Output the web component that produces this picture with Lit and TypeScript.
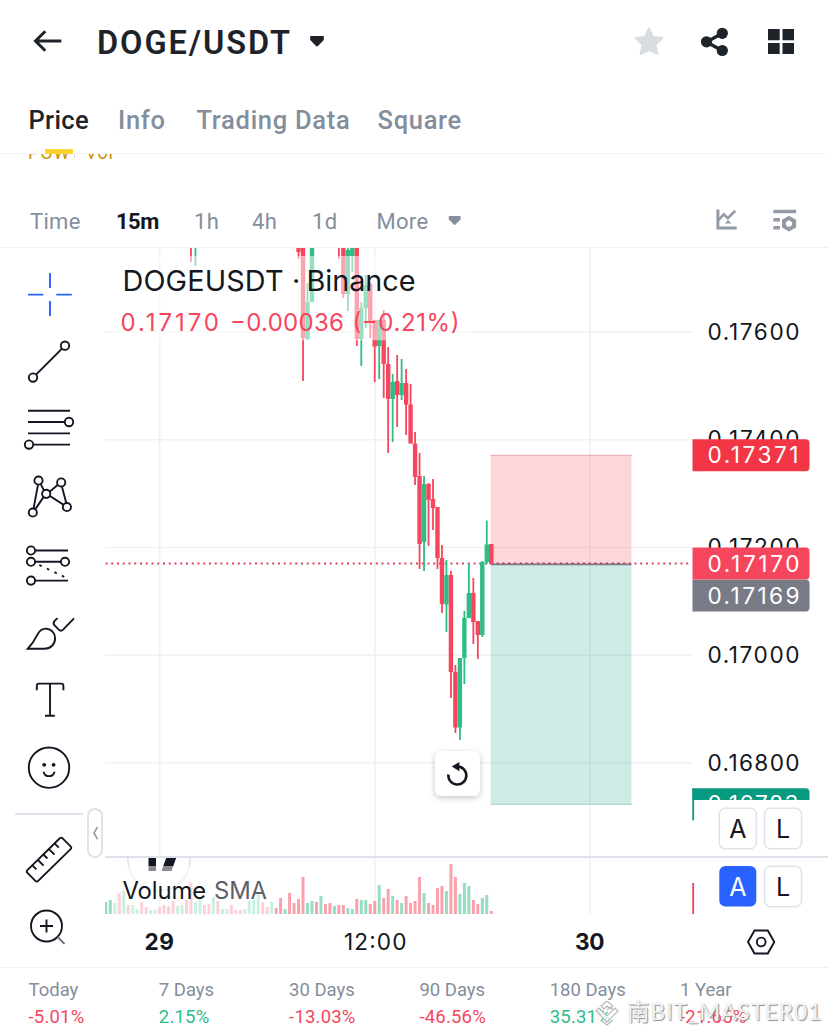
import { LitElement, html, svg, css } from "lit";
import { customElement } from "lit/decorators.js";

type Candle = [number, "r" | "g", number, number, number, number];

// index, direction, wick top, body top, body bottom, wick bottom
const CANDLES: Candle[] = [
  [7, "r", 240, 240, 240, 262], [8, "g", 240, 240, 240, 266],
  [31, "r", 240, 240, 252, 259], [32, "r", 240, 240, 338, 381],
  [33, "g", 283, 302, 339, 340], [34, "g", 240, 240, 302, 302],
  [40, "r", 240, 240, 240, 259], [41, "r", 240, 240, 294, 298],
  [42, "g", 240, 250, 294, 311], [43, "g", 240, 240, 256, 272],
  [44, "r", 240, 240, 339, 346], [45, "g", 302, 308, 339, 366],
  [46, "g", 275, 285, 308, 328], [47, "r", 282, 284, 322, 338],
  [48, "r", 320, 320, 346.5, 382], [49, "g", 320, 320, 346, 379],
  [50, "r", 310, 320, 364, 398], [51, "r", 347, 364, 399, 453],
  [52, "g", 374, 382, 399, 442], [53, "r", 355, 381, 395, 427],
  [54, "g", 359, 383, 395, 400], [55, "r", 369, 383, 404.5, 435],
  [56, "r", 384, 404.5, 443.5, 443.5], [57, "r", 432, 443.5, 477, 485],
  [58, "r", 453, 476, 544, 569], [59, "g", 476, 484, 542, 571],
  [60, "r", 483, 484, 500, 546], [61, "r", 479, 499, 508, 530],
  [62, "r", 507, 507, 558, 569], [63, "r", 545, 558, 604, 613],
  [64, "g", 560, 575, 604.5, 632], [65, "r", 571, 575, 672, 698],
  [66, "r", 665, 672, 727.5, 733], [67, "g", 658, 658, 727.5, 740],
  [68, "g", 611, 618, 658, 684], [69, "g", 564, 593, 618, 618],
  [70, "r", 578, 593, 622, 644], [71, "r", 621, 621, 635, 659],
  [72, "g", 561, 562, 635, 637], [73, "g", 520.5, 544.5, 562, 564],
  [74, "r", 544, 544, 564, 564],
];

const VOLUME =
  "g12 g14 g11 r21 g23 r9 g9 g5 r12 r7 g4 g4 r7 r9 r8 r13 g8 g9 r14 r31 g12 g15 r9 r10 g17 r13 g5 g5 r9 r4 r4 g5 g13 g14 g21 r12 r7 g12 r6 r16 g5 r21 r11 r15 " +
  "r37 g11 g13 r12 g18 r10 r11 g8 r9 r9 g6 g5 r15 g14 g14 r10 r13 g29 r16 r25 g18 r14 g11 r18 r11 r13 r37 g21 r11 r9 r26 r28 g23 r50 r37 g20 g31 g28 r14 r10 g16 g19 r3";

const xAt = (i: number) => 159.6 + 4.482 * i;

@customElement("price-chart")
export class PriceChart extends LitElement {
  static styles = css`
    :host { display: block; width: 723px; height: 719px; }
    svg { display: block; font-family: Inter, "Liberation Sans", sans-serif; }
    .grid { stroke: #f0f1f3; stroke-width: 1.6; }
    .divider { stroke: #dfe2ea; stroke-width: 2; }
    .r { fill: #f6465d; }
    .g { fill: #2ebd85; }
    .vr { fill: #f9a2ae; }
    .vg { fill: #96dec2; }
    .axis { font-size: 22.6px; fill: #131722; }
    .tag { font-size: 22.6px; fill: #fff; }
    .bold { font-weight: 700; }
    .title { font-size: 28.8px; fill: #131722; }
    .change { font-size: 24px; fill: #f6465d; }
    .study { font-size: 23.8px; fill: #131722; }
    .muted { fill: #5d606b; }
    .veil { fill: #fff; fill-opacity: 0.5; }
    .box { fill: #fff; stroke: #e0e3eb; stroke-width: 1.6; }
    .box-on { fill: #2962ff; }
    .letter { font-size: 25px; fill: #131722; text-anchor: middle; }
    .letter-on { fill: #fff; }
    .line { fill: none; stroke: #131722; stroke-width: 1.9; }
    .arc { stroke-width: 2.6; }
    .button { fill: #fff; filter: drop-shadow(0 2px 3px rgba(0, 0, 0, 0.22)); }
  `;

  private candle([i, d, wt, bt, bb, wb]: Candle) {
    const x = xAt(i);
    return svg`<g class=${d}><rect x=${x - 0.9} y=${wt} width="1.8" height=${wb - wt}></rect>
      <rect x=${x - 2.2} y=${bt} width="4.4" height=${bb - bt}></rect></g>`;
  }

  private box(x: number, y: number, letter: string, on = false) {
    return svg`<rect class=${on ? "box-on" : "box"} x=${x} y=${y} width="37" height="40.5" rx="6"></rect>
      <text class=${on ? "letter letter-on" : "letter"} x=${x + 18.5} y=${y + 29.5}>${letter}</text>`;
  }

  private tag(y: number, fill: string, label: string, width = 91) {
    return svg`<path d="M692.5 ${y}h113a4 4 0 0 1 4 4v24a4 4 0 0 1 -4 4h-113z" fill=${fill}></path>
      <text class="tag" x="707.5" y=${y + 24} textLength=${width}>${label}</text>`;
  }

  render() {
    return html`<svg width="723" height="719" viewBox="105 248 723 719">
      <defs>
        <clipPath id="pane"><rect x="105" y="248" width="587" height="609"></rect></clipPath>
        <clipPath id="lower"><rect x="105" y="858" width="723" height="56"></rect></clipPath>
        <clipPath id="target"><rect x="690" y="788" width="130" height="12"></rect></clipPath>
      </defs>
      ${[331.7, 439.7, 547.5, 655.2, 762.7].map((y) => svg`<line class="grid" x1="105" x2="692" y1=${y} y2=${y}></line>`)}
      ${[159.6, 375, 590].map((x) => svg`<line class="grid" x1=${x} x2=${x} y1="249" y2="914"></line>`)}

      <line x1="105.5" x2="692" y1="563.5" y2="563.5" stroke="#e0405a" stroke-width="2" stroke-dasharray="2 3.75"></line>
      <rect x="490.5" y="455" width="141" height="109" fill="#f23645" fill-opacity="0.2"></rect>
      <rect x="490.5" y="564" width="141" height="241" fill="#089981" fill-opacity="0.2"></rect>
      <path d="M490.5 455.3h141" stroke="#eab4b9" stroke-width="1.2"></path>
      <path d="M490.5 804.3h141" stroke="#b3dbd3" stroke-width="1.4"></path>
      <path d="M490.5 564.4h141" stroke="#787b86" stroke-width="1.6"></path>
      <g clip-path="url(#pane)">${CANDLES.map((c) => this.candle(c))}</g>
      <line x1="497" x2="631" y1="563.3" y2="563.3" stroke="#c04458" stroke-width="1.2" stroke-dasharray="2 3.75"></line>

      <g clip-path="url(#lower)">
        <circle cx="159" cy="860" r="31" fill="#fff" stroke="#e3e6ed" stroke-width="1.8"></circle>
        <path d="M148.5 850h7.5v21h-7.5zM169 850h10l-7.5 21h-10z" fill="#131722"></path>
        ${VOLUME.split(" ").map((v, n) => {
          const h = Number(v.slice(1));
          return svg`<rect class=${"v" + v[0]} x=${xAt(n - 12) - 1.5} y=${914 - h} width="3" height=${h}></rect>`;
        })}
      </g>
      <line class="divider" x1="105" x2="828" y1="857" y2="857"></line>

      <rect class="veil" x="113" y="256" width="359" height="84.3"></rect>
      <rect class="veil" x="113" y="866" width="162" height="48"></rect>
      <text class="title" x="122.500" y="291" textLength="161">DOGEUSDT</text>
      <text class="title" x="292" y="291">·</text>
      <text class="title" x="306.500" y="291" textLength="109">Binance</text>
      <text class="change" x="120.500" y="331.300" textLength="98.500">0.17170</text>
      <text class="change" x="230" y="331.300" textLength="114">−0.00036</text>
      <text class="change" x="352.500" y="331.300" textLength="107">(−0.21%)</text>
      <text class="study" x="122.500" y="899" textLength="83.500">Volume</text>
      <text class="study muted" x="214" y="899" textLength="53">SMA</text>

      ${[["0.17600", 339.5], ["0.17400", 447], ["0.17200", 554.5], ["0.17000", 662.7], ["0.16800", 770.5]].map(
        ([t, y]) => svg`<text class="axis" x="707.500" y=${y} textLength="92">${t}</text>`
      )}
      ${this.tag(439.3, "#f23645", "0.17371")}
      ${this.tag(579.5, "#787b86", "0.17169", 92)}
      ${this.tag(547.6, "#f6465d", "0.17170", 92)}
      <g clip-path="url(#target)">${this.tag(788.3, "#089981", "0.16723")}</g>
      <path d="M693.200 788.300v32" stroke="#089981" stroke-width="1.800"></path>
      <path d="M693.200 883v31" stroke="#f0435a" stroke-width="1.800"></path>

      ${this.box(719.3, 808.3, "A")}${this.box(764.5, 808.3, "L")}
      ${this.box(719.3, 866, "A", true)}${this.box(764.5, 866.3, "L")}

      <text class="axis bold" x="144.500" y="950" textLength="29.500">29</text>
      <text class="axis" x="344" y="950" textLength="62.500">12:00</text>
      <text class="axis bold" x="575" y="950" textLength="29.500">30</text>
      <path class="line" d="M748 942l6.500-11.500h13.300l6.500 11.500-6.500 11.500h-13.300z"></path>
      <circle class="line" cx="761.200" cy="942" r="4.400"></circle>

      <rect class="button" x="435" y="751" width="45" height="45" rx="6"></rect>
      <path class="line arc" d="M448.400 774.500A9 9 0 1 0 457.500 766.500"></path>
      <path d="M451.800 766.500l7.600-4.500v9.300z" fill="#131722"></path>
    </svg>`;
  }
}

const TOOLS = [
  svg`<path class="blue" d="M50 273v15M50 301v15M28 294.5h15.3M56.3 294.5h15.5"></path>`,
  svg`<path d="M36 374.3L62 348.2"></path><circle cx="33" cy="377.2" r="4.2"></circle><circle cx="65" cy="345.3" r="4.2"></circle>`,
  svg`<path d="M28 411.2h42M28 422.4h37M28 433.8h42M33 445h37"></path><circle cx="69" cy="422.4" r="4.2"></circle><circle cx="29" cy="445" r="4.2"></circle>`,
  svg`<path d="M38 484.7L33.6 508.5M40.6 484l3.3 6.5M35.5 509l8-11.7M49.6 491.8l8-6.6M50 496.2l13.3 8.6M61.9 486.7l4.3 16.2"></path>
    <circle cx="38.5" cy="480.7" r="4.1"></circle><circle cx="61.2" cy="482.6" r="4.1"></circle><circle cx="46.2" cy="494" r="4.1"></circle><circle cx="66.9" cy="507.2" r="4.1"></circle><circle cx="32.8" cy="512.7" r="4.1"></circle>`,
  svg`<path d="M35.2 550.4H68M35.2 561.7h25.6M35.2 580.5H68"></path><path d="M39.4 565l25.5 12" stroke-dasharray="2.6 5.7"></path>
    <circle cx="31" cy="550.4" r="4.1"></circle><circle cx="31" cy="561.7" r="4.1"></circle><circle cx="65" cy="561.7" r="4.1"></circle><circle cx="31" cy="580.5" r="4.1"></circle>`,
  svg`<path d="M27.8 648.4C33 643 35 639 37 635c2-4 5-6.7 8.5-6.7 5.5 0 9.6 4.2 9.6 9.7 0 6-4.4 10.4-10.6 10.4z"></path>
    <path d="M57.6 617.8l-3 2.7c-1.2 1.4-1.2 3.2 0 4.6l4.2 4.2c1.3 1.2 3 1.2 4.3 0L74 618"></path>`,
  svg`<path d="M36.8 690.6v-4.5q0-2.1 2.1-2.1h22.4q2.1 0 2.1 2.1v4.5M50 684v32.2M45 716.2h9.8"></path>`,
  svg`<circle cx="49" cy="767.8" r="20.2"></circle><path d="M43.5 771.8c1.5 6 9.5 6 11 0"></path>
    <circle class="dot" cx="44.2" cy="765" r="1.9"></circle><circle class="dot" cx="53.6" cy="765" r="1.9"></circle>`,
];

@customElement("drawing-tools")
export class DrawingTools extends LitElement {
  static styles = css`
    :host { display: flex; flex-direction: column; position: relative; width: 105px; height: 719px; box-sizing: border-box; padding-top: 12px; }
    .tool { display: flex; justify-content: center; align-items: center; width: 98px; height: 67.75px; }
    svg { display: block; fill: none; stroke: #131722; stroke-width: 1.9; }
    .blue { stroke: #2962ff; }
    .dot { fill: #131722; stroke: none; }
    .rule { height: 2px; width: 68px; margin: 10.5px 0 12px 15px; background: #e0e3eb; }
    .handle { position: absolute; left: 87px; top: 559.5px; width: 16px; height: 50px; box-sizing: border-box; border: 2px solid #dfe2ea; border-radius: 8px; background: #fff; display: flex; align-items: center; justify-content: center; }
    .handle svg { stroke: #9598a1; stroke-width: 1.6; }
    .faded { stroke: #6a6d78; }
  `;
  render() {
    return html`
      ${TOOLS.map((t, i) => html`<div class="tool"><svg width="54" height="54" viewBox="22 ${266.9 + i * 67.75} 54 54">${t}</svg></div>`)}
      <div class="rule"></div>
      <div class="tool"><svg width="54" height="54" viewBox="22 833.4 54 54">
        <path d="M59.8 838.7q1.4-1.4 2.8 0l8 8q1.4 1.4 0 2.8L38.2 881.3q-1.4 1.4-2.8 0l-8-8q-1.4-1.4 0-2.8zM32.4 865.8l4 4M38 860.4l5.6 5.6M43.4 854.9l4 4M48.9 849.5l5.6 5.6M54.6 843.8l4.2 4.2"></path></svg></div>
      <div class="tool"><svg width="54" height="54" viewBox="21.5 900 54 54">
        <circle cx="46" cy="925" r="15.5"></circle><path d="M39.5 925h13M46 918.5v13"></path><path class="faded" d="M57 935.8l7 7"></path></svg></div>
      <div class="handle"><svg width="7" height="14" viewBox="0 0 7 14"><path d="M5.5 .8L2 7l3.5 6.2"></path></svg></div>`;
  }
}

@customElement("app-root")
export class AppRoot extends LitElement {
  static styles = css`
    :host { display: flex; flex-direction: column; position: relative; width: 828px; height: 1035px; overflow: hidden; background: #fff; color: #1e2329; font-family: Roboto, "Liberation Sans", sans-serif; }
    svg { display: block; }
    .top { display: flex; align-items: center; height: 84px; box-sizing: border-box; padding: 0 33px 0 32px; }
    .back { margin-bottom: 1.5px; }
    .pair { margin: 1px 0 0 35px; font-size: 32.5px; line-height: 40px; font-weight: 600; letter-spacing: 1.9px; white-space: nowrap; width: 212px; }
    .spacer { flex: 1; }
    .actions { display: flex; align-items: center; gap: 36px; }
    .tabs { position: relative; display: grid; grid-template-columns: 89.5px 78.5px 181px 1fr; height: 70px; box-sizing: border-box; border-bottom: 1.5px solid #f3f4f6; padding: 18.5px 0 0 28.5px; font-size: 25.5px; line-height: 34px; font-weight: 500; color: #848e9c; white-space: nowrap; letter-spacing: 0.7px; }
    .tabs .on { color: #1e2329; letter-spacing: 0.35px; }
    .underline { position: absolute; left: 45px; top: 64.5px; width: 28px; height: 5px; background: #fcd535; z-index: 1; }
    .tags { display: flex; height: 40px; overflow: hidden; padding-left: 28px; font-size: 18px; line-height: 20px; color: #c99400; }
    .tags span { margin-top: -11px; letter-spacing: 0.9px; }
    .tags i { width: 1px; height: 4px; background: #d8dce1; margin: 0 10px 0 4px; }
    .intervals { display: flex; height: 54px; box-sizing: border-box; border-bottom: 1px solid #f0f1f3; padding: 12.5px 31px 0 30px; font-size: 22px; line-height: 30px; color: #848e9c; }
    .cells { display: grid; grid-template-columns: 86px 78px 58px 60px 64.5px 71px 20px; letter-spacing: 0.3px; }
    .cells .on { color: #131722; font-weight: 700; letter-spacing: -0.5px; }
    .caret { margin-top: 9.5px; }
    .tools { display: flex; gap: 35px; height: 24px; margin-top: 1.5px; }
    .main { display: flex; height: 719px; }
    .stats { display: grid; grid-template-columns: repeat(6, 130.3px); height: 68px; box-sizing: border-box; border-top: 1px solid #eef0f2; padding: 9px 0 0 28.5px; font-size: 18.5px; line-height: 26.5px; letter-spacing: 0; }
    .stats span { display: block; color: #848e9c; }
    .down { color: #f6465d; letter-spacing: 0.2px; }
    .up { color: #2ebd85; letter-spacing: 0.2px; }
    .mark { position: absolute; left: 595px; top: 997px; display: flex; align-items: center; gap: 6px; font: 22.5px/30px Lato, "Noto Sans CJK SC", sans-serif; letter-spacing: 1.05px; color: rgba(255, 255, 255, 0.9); text-shadow: 1px 1px 1px #8c8f94, 0 0 1px #b8babd; white-space: nowrap; }
    .mark svg { stroke: #b4b6ba; stroke-width: 1.1; fill: rgba(255, 255, 255, 0.75); margin-top: 3px; }
  `;

  render() {
    const stats = [["Today", "-5.01%"], ["7 Days", "2.15%"], ["30 Days", "-13.03%"], ["90 Days", "-46.56%"], ["180 Days", "35.31%"], ["1 Year", "-21.65%"]];
    return html`
      <header class="top">
        <svg class="back" width="30" height="26" viewBox="32 28 30 26" fill="none" stroke="#1e2329" stroke-width="3"><path d="M35.5 41H61.3M45.3 31.2L35.5 41l9.8 9.8"></path></svg>
        <h1 class="pair">DOGE/USDT</h1>
        <svg width="16" height="12" viewBox="0 0 16 12" fill="#1e2329"><path d="M1.2 0h13.6v4L9 10q-1 .9-2 0L1.2 4z"></path></svg>
        <div class="spacer"></div>
        <div class="actions">
          <svg width="30" height="30" viewBox="634 27 30 30" fill="#d8dee0" stroke="#d8dee0" stroke-width="2" stroke-linejoin="round"><path d="M649 28.3l4 8.600 9.300 1.100-6.900 6.400 1.900 9.500-8.300-3.800-8.300 3.800 1.900-9.500-6.900-6.400 9.300-1.100z"></path></svg>
          <svg width="30" height="30" viewBox="700 26.5 30 30" fill="#1e2329"><path d="M722 33l-15.500 8.500L722 50" fill="none" stroke="#1e2329" stroke-width="3.400"></path><circle cx="706.500" cy="41.300" r="5.600"></circle><circle cx="722.300" cy="32.800" r="5.600"></circle><circle cx="722.300" cy="50" r="5.600"></circle></svg>
          <svg width="29" height="30" viewBox="766 27 29 30" fill="#1e2329"><path d="M768 29h11.700v11.200h-11.700zM782.500 29h11.500v11.200h-11.500zM768 43h11.700v11h-11.700zM782.500 43h11.500v11h-11.500z"></path></svg>
        </div>
      </header>
      <nav class="tabs">
        <span class="on">Price</span><span>Info</span><span>Trading Data</span><span>Square</span>
        <div class="underline"></div>
      </nav>
      <div class="tags"><span>POW</span><i></i><span>Vol</span></div>
      <div class="intervals">
        <div class="cells">
          <span>Time</span><span class="on">15m</span><span>1h</span><span>4h</span><span>1d</span><span>More</span>
          <svg class="caret" width="13" height="10" viewBox="0 0 13 10" fill="#848e9c"><path d="M.8 0h11.800v3.200L7.600 8.600q-.9.800-1.800 0L.8 3.200z"></path></svg>
        </div>
        <div class="spacer"></div>
        <div class="tools">
          <svg width="22" height="24" viewBox="716 208.500 22 24" fill="none" stroke="#929aa5" stroke-width="3"><path d="M717.900 210v18.500h18.800"></path><path stroke-width="2.600" d="M718.500 220.500l5.300-5.700 4 3.900 7.400-7.300"></path><path fill="#929aa5" stroke="none" d="M724.800 224l3.300-3.400 3.400 3.400z"></path></svg>
          <svg width="24" height="24" viewBox="773 208.500 24 24" fill="#929aa5"><path d="M773.400 210.300h22.700v3.400h-22.700zM773.400 218.500h6.600v3.400h-6.600zM773.400 226.600h6.600v3.400h-6.600z"></path><path fill-rule="evenodd" d="M789 216.300l7.100 3.900v7.700l-7.100 4.100-7-4.100v-7.700zM789 220.900a3.200 3.200 0 1 0 .01 0z"></path></svg>
        </div>
      </div>
      <main class="main"><drawing-tools></drawing-tools><price-chart></price-chart></main>
      <footer class="stats">
        ${stats.map(([k, v]) => html`<div><span>${k}</span><div class=${v.startsWith("-") ? "down" : "up"}>${v}</div></div>`)}
      </footer>
      <div class="mark">
        <svg width="26" height="26" viewBox="0 0 24 26"><path d="M5 5l6-5 6 5-3 3-3-3-3 3zM0 10l3-3 8 8 8-8 3 3-11 11zM11 9l3-3 3 3M5 19l6 5 6-5"></path></svg>
        <span>南BIT_MASTER01</span>
      </div>`;
  }
}
